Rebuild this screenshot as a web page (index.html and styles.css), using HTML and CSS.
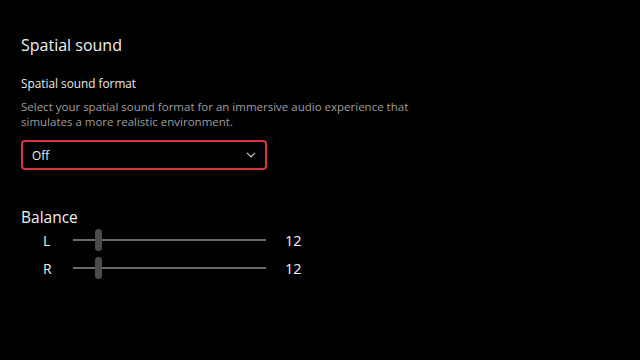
FILE: index.html
```html
<!DOCTYPE html>
<html>
<head>
<meta charset="utf-8">
<link rel="stylesheet" href="styles.css">
</head>
<body>
<main class="page">
  <h1 class="title">Spatial sound</h1>
  <h2 class="label">Spatial sound format</h2>
  <p class="desc">Select your spatial sound format for an immersive audio experience that simulates a more realistic environment.</p>
  <div class="select">
    <span class="select-value">Off</span>
    <svg class="chev" width="10" height="6" viewBox="0 0 10 6"><path d="M1 0.8 L5 4.8 L9 0.8" fill="none" stroke="#cfcfcf" stroke-width="1.2"/></svg>
  </div>
  <h2 class="balance">Balance</h2>
  <div class="rows">
    <div class="row">
      <span class="ch">L</span>
      <div class="slider"><div class="track"></div><div class="thumb"></div></div>
      <span class="val">12</span>
    </div>
    <div class="row">
      <span class="ch">R</span>
      <div class="slider"><div class="track"></div><div class="thumb"></div></div>
      <span class="val">12</span>
    </div>
  </div>
</main>
</body>
</html>
```
FILE: styles.css
```css
html, body {
  margin: 0;
  padding: 0;
  background: #000;
  width: 640px;
  height: 360px;
  overflow: hidden;
}
body {
  font-family: "Open Sans", "Noto Sans", sans-serif;
  color: #fff;
}
.page {
  padding: 34px 0 0 21px;
}
.title {
  margin: 0;
  font-size: 16px;
  font-weight: 400;
  line-height: 22px;
  color: #f2f2f2;
}
.label {
  margin: 19px 0 0;
  font-size: 11.8px;
  font-weight: 400;
  line-height: 16px;
  color: #eaeaea;
}
.desc {
  margin: 8px 0 0;
  width: 420px;
  font-size: 11.5px;
  line-height: 15px;
  color: #9e9e9e;
}
.select {
  margin-top: 11px;
  box-sizing: border-box;
  width: 246px;
  height: 30px;
  border: 2px solid #d7343d;
  border-radius: 4px;
  display: flex;
  align-items: center;
  justify-content: space-between;
  padding: 0 9px 0 9px;
}
.select-value {
  font-size: 11.8px;
  color: #f0f0f0;
}
.chev {
  display: block;
}
.balance {
  margin: 37px 0 0;
  font-size: 15.5px;
  font-weight: 400;
  line-height: 20px;
  color: #f0f0f0;
}
.rows {
  margin-top: -1px;
}
.row {
  display: flex;
  align-items: center;
  height: 28px;
}
.ch {
  width: 52px;
  padding-left: 22px;
  box-sizing: border-box;
  font-size: 14px;
  color: #f0f0f0;
}
.slider {
  position: relative;
  width: 193px;
  height: 22px;
}
.track {
  position: absolute;
  left: 0;
  right: 0;
  top: 10px;
  height: 2px;
  background: #6a6a6a;
}
.thumb {
  position: absolute;
  left: 22px;
  top: 0;
  width: 7px;
  height: 22px;
  border-radius: 4px;
  background: #4c4c4c;
}
.val {
  margin-left: 19px;
  font-size: 14.5px;
  color: #f0f0f0;
}
```
